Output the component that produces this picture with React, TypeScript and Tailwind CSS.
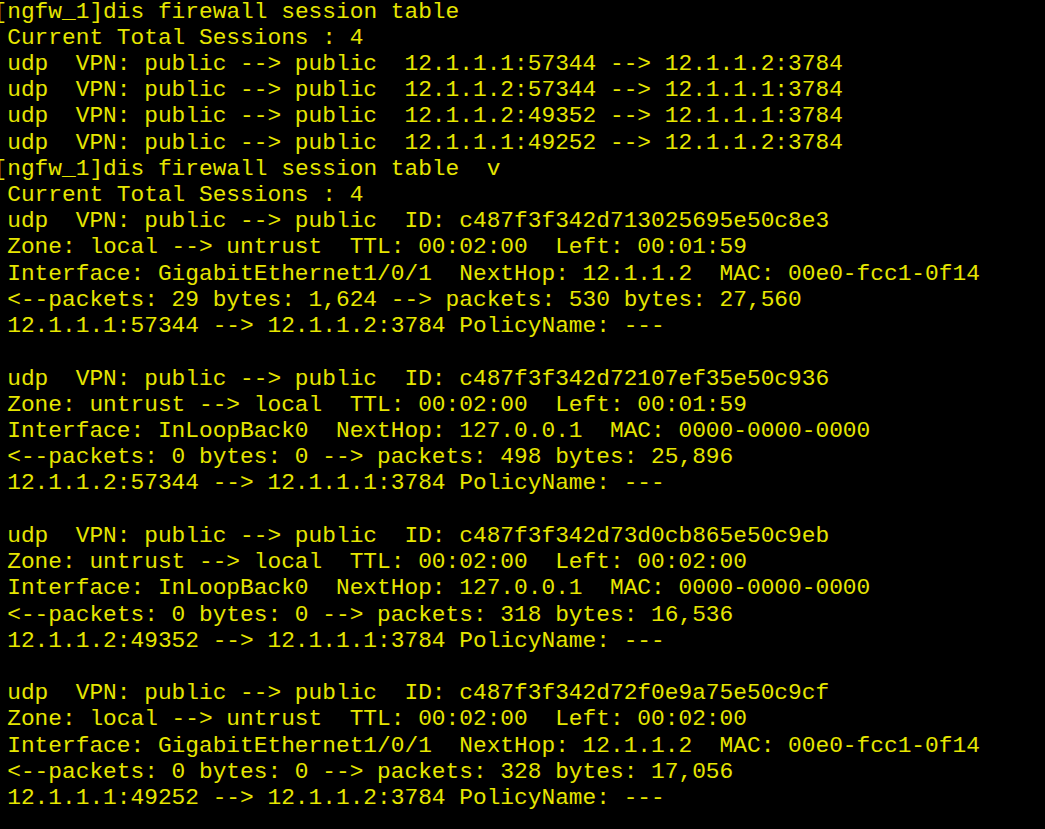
// terminal output, 1 col = 13.7px (0.6em of Liberation Mono)
const lines = [
  "[ngfw_1]dis firewall session table",
  " Current Total Sessions : 4",
  " udp  VPN: public --> public  12.1.1.1:57344 --> 12.1.1.2:3784",
  " udp  VPN: public --> public  12.1.1.2:57344 --> 12.1.1.1:3784",
  " udp  VPN: public --> public  12.1.1.2:49352 --> 12.1.1.1:3784",
  " udp  VPN: public --> public  12.1.1.1:49252 --> 12.1.1.2:3784",
  "[ngfw_1]dis firewall session table  v",
  " Current Total Sessions : 4",
  " udp  VPN: public --> public  ID: c487f3f342d713025695e50c8e3",
  " Zone: local --> untrust  TTL: 00:02:00  Left: 00:01:59",
  " Interface: GigabitEthernet1/0/1  NextHop: 12.1.1.2  MAC: 00e0-fcc1-0f14",
  " <--packets: 29 bytes: 1,624 --> packets: 530 bytes: 27,560",
  " 12.1.1.1:57344 --> 12.1.1.2:3784 PolicyName: ---",
  "",
  " udp  VPN: public --> public  ID: c487f3f342d72107ef35e50c936",
  " Zone: untrust --> local  TTL: 00:02:00  Left: 00:01:59",
  " Interface: InLoopBack0  NextHop: 127.0.0.1  MAC: 0000-0000-0000",
  " <--packets: 0 bytes: 0 --> packets: 498 bytes: 25,896",
  " 12.1.1.2:57344 --> 12.1.1.1:3784 PolicyName: ---",
  "",
  " udp  VPN: public --> public  ID: c487f3f342d73d0cb865e50c9eb",
  " Zone: untrust --> local  TTL: 00:02:00  Left: 00:02:00",
  " Interface: InLoopBack0  NextHop: 127.0.0.1  MAC: 0000-0000-0000",
  " <--packets: 0 bytes: 0 --> packets: 318 bytes: 16,536",
  " 12.1.1.2:49352 --> 12.1.1.1:3784 PolicyName: ---",
  "",
  " udp  VPN: public --> public  ID: c487f3f342d72f0e9a75e50c9cf",
  " Zone: local --> untrust  TTL: 00:02:00  Left: 00:02:00",
  " Interface: GigabitEthernet1/0/1  NextHop: 12.1.1.2  MAC: 00e0-fcc1-0f14",
  " <--packets: 0 bytes: 0 --> packets: 328 bytes: 17,056",
  " 12.1.1.1:49252 --> 12.1.1.2:3784 PolicyName: ---",
];

export default function App() {
  return (
    <div className="w-[1045px] h-[829px] bg-black overflow-hidden">
      <pre className="pl-[7.2px] mt-[-1.5px] text-[#e6e600] text-[22.83px] leading-[26.23px] whitespace-pre font-['Liberation_Mono','Courier_New',monospace]">
        {lines.map((l, i) =>
          l.startsWith(" ") || l === "" ? (
            <div key={i} className="h-[26.23px]">
              {l.slice(1)}
            </div>
          ) : (
            // prompt lines start one column further left, partly off screen
            <div key={i} className="h-[26.23px] ml-[-13.7px]">
              {l}
            </div>
          )
        )}
      </pre>
    </div>
  );
}
